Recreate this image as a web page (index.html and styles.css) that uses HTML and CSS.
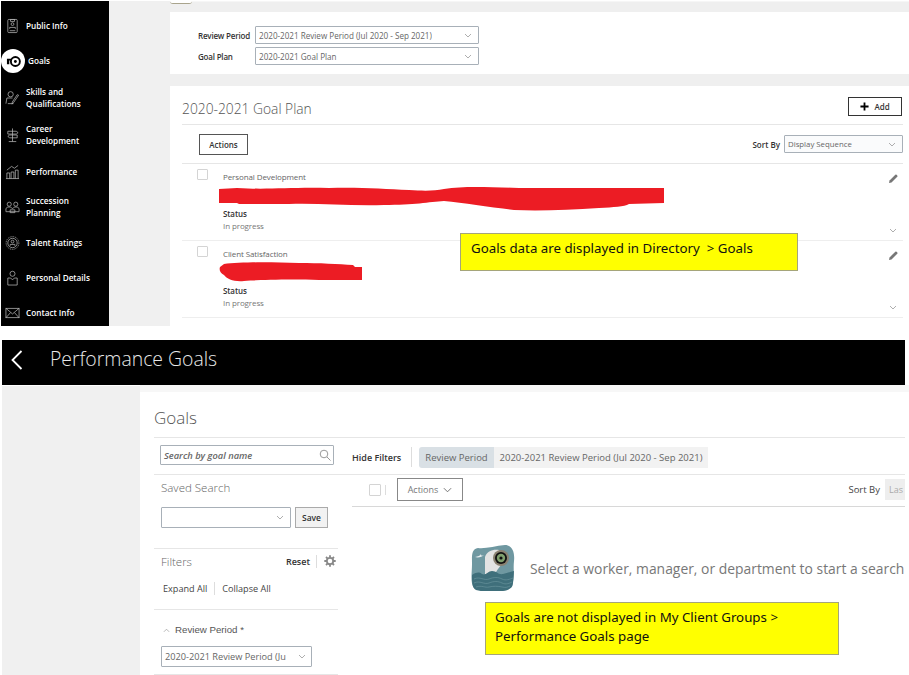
FILE: index.html
```html
<!DOCTYPE html>
<html lang="en">
<head>
<meta charset="utf-8">
<title>Goals comparison</title>
<link rel="stylesheet" href="styles.css">
</head>
<body>
<div class="page">
  <section class="directory">
    <nav class="side">
      <a class="nav"><svg class="ico" viewBox="0 0 16 16"><rect x="3" y="1" width="10" height="14" rx="1"/><rect x="6" y="1" width="4" height="2"/><circle cx="8" cy="6" r="1.5"/><path d="M5 11v-1.500h6V11M5 13h6"/></svg><span>Public Info</span></a>
      <a class="nav active"><span class="badge"><svg class="goal" viewBox="0 0 16 16"><circle cx="10" cy="8" r="4.800"/><circle class="dot" cx="10" cy="8" r="1.500"/><path class="fill" d="M1 5h4.500v2H3.500v4H1z"/></svg></span><span>Goals</span></a>
      <a class="nav"><svg class="ico" viewBox="0 0 16 16"><circle cx="6" cy="4" r="2.800"/><path d="M1 14l1-6h6M3 14h6M14.500 5L9 13l-1.500 1.500.3-2.200L13 4.500z"/></svg><span>Skills and<br>Qualifications</span></a>
      <a class="nav"><svg class="ico" viewBox="0 0 16 16"><path d="M8 1v14M4 15h8M3 4h9l2 1.500L12 7H3zM13 8H5L3 9.500 5 11h8z"/></svg><span>Career<br>Development</span></a>
      <a class="nav"><svg class="ico" viewBox="0 0 16 16"><path d="M1 15h14M2 15V9h3v6M6.500 15V8h3v7M11 15V6h3v9M2 6l5-4 3 2 4-3"/></svg><span>Performance</span></a>
      <a class="nav"><svg class="ico" viewBox="0 0 16 16"><circle cx="4.500" cy="5" r="2.200"/><circle cx="11.500" cy="5" r="2.200"/><path d="M1 13V9.500L3 8h3l2 2 2-2h3l2 1.500V13zM5.500 11h5v3h-5z"/></svg><span>Succession<br>Planning</span></a>
      <a class="nav"><svg class="ico" viewBox="0 0 16 16"><circle cx="8" cy="8" r="6.800" stroke-dasharray="1.200 .8"/><circle cx="8" cy="8" r="5"/><circle cx="8" cy="6.500" r="1.500"/><path d="M5.500 11V9.500h5V11"/></svg><span>Talent Ratings</span></a>
      <a class="nav"><svg class="ico" viewBox="0 0 16 16"><circle cx="8" cy="3.500" r="2.700"/><path d="M3 8h3l2 2 2-2h3v7.500H3z"/></svg><span>Personal Details</span></a>
      <a class="nav"><svg class="ico" viewBox="0 0 16 16"><rect x="1" y="3" width="14" height="10"/><path d="M1 3l7 6 7-6M1 13l5-5.500M15 13l-5-5.500"/></svg><span>Contact Info</span></a>
    </nav>
    <div class="gutter"></div>
    <main class="dir-main">
      <div class="strip"><i class="sliver"></i></div>
      <div class="period-card">
        <div class="field"><span class="field-label">Review Period</span><div class="select wide"><span>2020-2021 Review Period (Jul 2020 - Sep 2021)</span><svg class="chev" viewBox="0 0 8 5"><path d="M1 1l3 3 3-3"/></svg></div></div>
        <div class="field"><span class="field-label">Goal Plan</span><div class="select wide"><span>2020-2021 Goal Plan</span><svg class="chev" viewBox="0 0 8 5"><path d="M1 1l3 3 3-3"/></svg></div></div>
      </div>
      <div class="plan-card">
        <header class="plan-head">
          <h1>2020-2021 Goal Plan</h1>
          <button class="add"><svg viewBox="0 0 10 10"><path d="M5 .5v9M.5 5h9"/></svg>Add</button>
        </header>
        <div class="plan-tools">
          <button class="actions">Actions</button>
          <div class="sort"><span>Sort By</span><div class="select sort-select"><span>Display Sequence</span><svg class="chev" viewBox="0 0 8 5"><path d="M1 1l3 3 3-3"/></svg></div></div>
        </div>
        <article class="goal-row">
          <i class="check"></i>
          <div class="goal-body">
            <div class="goal-name">Personal Development</div>
            <div class="status">Status</div>
            <div class="progress">In progress</div>
          </div>
          <svg class="scribble long" viewBox="0 0 445 25"><path d="M0 3L18 2C50 4 70 1 110 2C140 1 165 3 190 4C205 5 215 5 225 3C245 0 265 1 300 2L445 2V17L410 18C405 21 395 21 380 22C350 24 320 25 295 24C270 21 245 17 225 15C210 16 195 19 165 19C130 20 100 17 70 18L20 18L18 17H0z"/></svg>
          <div class="row-icons">
            <svg class="pencil" viewBox="0 0 10 10"><path d="M0 10l.6-2.800L7 .8a1 1 0 0 1 1.400 0l.8.8a1 1 0 0 1 0 1.400L2.800 9.400z"/></svg>
            <svg class="row-chev" viewBox="0 0 8 5"><path d="M1 1l3 3 3-3"/></svg>
          </div>
        </article>
        <article class="goal-row">
          <i class="check"></i>
          <div class="goal-body">
            <div class="goal-name">Client Satisfaction</div>
            <div class="status">Status</div>
            <div class="progress">In progress</div>
          </div>
          <svg class="scribble short" viewBox="0 0 143 20"><path d="M5 2C20 0 50 0 80 1C100 1 120 2 134 3L136 5H143V18L100 18C70 17 40 18 25 19C15 20 8 17 5 13C1 11 0 8 1 5z"/></svg>
          <div class="row-icons">
            <svg class="pencil" viewBox="0 0 10 10"><path d="M0 10l.6-2.800L7 .8a1 1 0 0 1 1.400 0l.8.8a1 1 0 0 1 0 1.400L2.800 9.400z"/></svg>
            <svg class="row-chev" viewBox="0 0 8 5"><path d="M1 1l3 3 3-3"/></svg>
          </div>
        </article>
      </div>
    </main>
  </section>

  <header class="perf-bar">
    <svg viewBox="0 0 12 20"><path d="M10.500 1L1.500 10l9 9"/></svg>
    <span>Performance Goals</span>
  </header>

  <section class="perf">
    <div class="perf-pane"></div>
    <div class="perf-content">
      <h2>Goals</h2>
      <div class="perf-cols">
        <aside class="filters">
          <div class="search-wrap">
            <div class="search"><em>Search by goal name</em><svg viewBox="0 0 12 12"><circle cx="5" cy="5" r="3.800"/><path d="M8 8l3.500 3.500"/></svg></div>
          </div>
          <div class="saved">
            <div class="saved-title">Saved Search</div>
            <div class="saved-row">
              <div class="select saved-select"><span></span><svg class="chev" viewBox="0 0 8 5"><path d="M1 1l3 3 3-3"/></svg></div>
              <button class="save">Save</button>
            </div>
          </div>
          <div class="filter-box">
            <div class="filter-head"><span class="filters-title">Filters</span><span class="reset">Reset</span><i class="vsep"></i><svg class="gear" viewBox="0 0 12 12"><circle cx="6" cy="6" r="3.200"/><path d="M6 .3v2M6 9.700v2M.3 6h2M9.700 6h2M2 2l1.400 1.400M8.600 8.600L10 10M2 10l1.400-1.400M8.600 3.400L10 2"/></svg></div>
            <div class="expand"><span>Expand All</span><i class="vsep"></i><span>Collapse All</span></div>
          </div>
          <div class="review">
            <div class="review-title"><svg viewBox="0 0 8 5"><path d="M1 4l3-3 3 3"/></svg>Review Period *</div>
            <div class="select review-select"><span>2020-2021 Review Period (Ju</span><svg class="chev" viewBox="0 0 8 5"><path d="M1 1l3 3 3-3"/></svg></div>
          </div>
        </aside>
        <div class="results">
          <div class="chips">
            <span class="hide">Hide Filters</span><i class="vsep tall"></i>
            <div class="chip"><span class="chip-key">Review Period</span><span class="chip-val">2020-2021 Review Period (Jul 2020 - Sep 2021)</span></div>
          </div>
          <div class="result-tools">
            <i class="check big"></i><i class="vsep"></i>
            <button class="actions-menu">Actions<svg viewBox="0 0 10 6"><path d="M1 1l4 4 4-4"/></svg></button>
            <span class="res-sort">Sort By</span><span class="last">Las</span>
          </div>
          <div class="empty">
            <svg class="spy" viewBox="0 0 44 46">
              <path class="blob" d="M7 3C14 4 24 1 34 0c7 0 10 7 9 16-1 8 1 17-2 24-2 5-9 5-17 5-8 1-17 1-21-2-4-5-2-16-2-24C1 12 0 4 7 3z"/>
              <path class="scope" d="M14 12C16 6 22 4 28 5L30 20C27 24 25 26 24 30L14 29z"/>
              <path class="sea" d="M1 30c5-3 7-3 10-1 4 2 6-3 10-3 5 0 6 4 11 3 4-1 7-2 11-3l-1 12c0 5-4 7-10 8-10 1-20 1-27-1-4-2-4-9-4-15z"/>
              <path class="wave" d="M3 34c6-3 10 2 15 0s9-2 13 0 8 0 11-1M3 38c6-3 10 2 15 0s9-2 13 0 8 0 10-1M5 42c6-2 9 1 13 0s9-1 13 0 6 0 8-1"/>
              <circle class="eye-out" cx="30" cy="13" r="8"/>
              <circle class="eye-mid" cx="30" cy="13" r="6"/>
              <circle class="iris" cx="30" cy="13" r="4.200"/>
              <circle class="pupil" cx="30" cy="13" r="1.600"/>
              <path class="gull" d="M4 12c3-1 5-1 6-3 0 2 1 2 3 1-2 2-6 3-9 2z"/>
            </svg>
            <span>Select a worker, manager, or department to start a search</span>
          </div>
        </div>
      </div>
    </div>
  </section>

  <aside class="note note-top">Goals data are displayed in Directory &nbsp;&gt; Goals</aside>
  <aside class="note note-bottom">Goals are not displayed in My Client Groups &gt;<br>Performance Goals page</aside>
</div>
</body>
</html>
```

FILE: styles.css
```css
* { box-sizing: border-box; }
html, body { margin: 0; background: #fff; }
body { font-family: "Open Sans", "Noto Sans", sans-serif; color: #444; }
.page { position: relative; width: 909px; height: 675px; overflow: hidden; padding-top: 1px; }
button { font-family: inherit; background: #fff; padding: 0; }
i { display: block; font-style: normal; }

/* Directory capture */
.directory { display: flex; height: 325px; margin-left: 1px; }
.side { width: 108px; background: #000; color: #fff; display: grid; grid-template-rows: 35px 35px 37px 37px 37px 35px 36px 35px 35px; padding-top: 3px; font-size: 8.200px; font-weight: 600; line-height: 12px; }
.nav { display: flex; align-items: center; gap: 6px; align-self: end; height: 26px; padding-left: 4px; }
.ico { width: 15px; height: 16px; flex: none; fill: none; stroke: #b5b5b5; stroke-width: .8; }
.nav.active { gap: 3px; padding-left: 0; position: relative; }
.badge { width: 24px; height: 24px; border-radius: 50%; background: #fff; display: flex; align-items: center; justify-content: center; flex: none; }
.goal { width: 15px; height: 15px; fill: none; stroke: #000; stroke-width: 2; }
.goal .fill, .goal .dot { fill: #000; stroke: none; }
.gutter { width: 61px; background: #f0f0f0; }
.dir-main { flex: 1; display: flex; flex-direction: column; background: #efefef; min-width: 0; }
.strip { height: 11px; border-top: 1px solid #f6f6f6; }
.sliver { width: 22px; height: 3px; background: #fff; border-bottom: 1px solid #a9a48c; border-radius: 0 0 11px 11px; margin-top: -1px; }
.period-card { height: 62px; background: #fff; padding: 14px 0 0 28px; display: flex; flex-direction: column; gap: 3px; }
.field { display: flex; align-items: center; height: 18px; }
.field-label { width: 57px; font-size: 8px; letter-spacing: -.2px; font-weight: 600; color: #333; white-space: nowrap; }
.select { display: flex; align-items: center; justify-content: space-between; background: #fff; border: 1px solid #a8b0b8; border-radius: 1px; font-size: 8.100px; color: #666; padding: 0 6px 0 3px; white-space: nowrap; overflow: hidden; }
.select > span { overflow: hidden; }
.wide { width: 224px; height: 18px; }
.chev { width: 8px; height: 5px; flex: none; fill: none; stroke: #999; stroke-width: .8; }
.plan-card { margin-top: 12px; flex: 1; background: #fff; padding: 0 6px 0 12px; }
.plan-head { height: 39px; padding: 6px 1px 0 0; border-bottom: 1px solid #e6e6e6; display: flex; align-items: center; justify-content: space-between; }
h1 { margin: 0; font-size: 13.800px; font-weight: 300; color: #555; }
.add { width: 54px; height: 19px; border: 1px solid #333; font-size: 8px; font-weight: 600; color: #333; display: flex; align-items: center; justify-content: center; gap: 5px; margin-top: -3px; }
.add svg { width: 9px; height: 9px; fill: none; stroke: #000; stroke-width: 2; }
.plan-tools { height: 39px; border-bottom: 1px solid #e6e6e6; display: flex; align-items: center; justify-content: space-between; padding-left: 17px; }
.actions { width: 49px; height: 21px; border: 1px solid #555; font-size: 8px; font-weight: 600; color: #333; }
.sort { display: flex; align-items: center; gap: 4px; font-size: 8px; font-weight: 600; color: #333; }
.sort-select { width: 119px; height: 18px; font-weight: 400; background: #fafbfc; font-size: 7.800px; }
.goal-row { position: relative; height: 77px; border-bottom: 1px solid #eee; display: flex; padding: 5px 4px 0 15px; }
.check { width: 11px; height: 11px; border: 1px solid #d4d4d4; border-radius: 1px; flex: none; }
.goal-body { margin-left: 15px; padding-top: 2px; flex: 1; font-size: 8px; letter-spacing: -.1px; line-height: 12px; }
.goal-name { color: #666; }
.status { margin-top: 25px; font-weight: 600; color: #333; }
.progress { color: #777; }
.scribble { position: absolute; fill: #ec1c24; filter: blur(.5px); }
.scribble.long { left: 37px; top: 22px; width: 445px; height: 25px; }
.scribble.short { left: 37px; top: 21px; width: 143px; height: 20px; }
.row-icons { width: 12px; display: flex; flex-direction: column; align-items: center; justify-content: space-between; padding: 5px 0 2px; height: 66px; }
.pencil { width: 9px; height: 9px; fill: #777; }
.row-chev { width: 8px; height: 5px; fill: none; stroke: #999; stroke-width: .8; }

/* Performance capture */
.perf-bar { margin: 14px 4px 0 2px; height: 45px; background: #000; color: #e8e8e8; display: flex; align-items: center; padding-left: 9px; gap: 27px; font-size: 19.400px; font-weight: 300; }
.perf-bar svg { width: 12px; height: 20px; margin-top: -6px; fill: none; stroke: #fff; stroke-width: 1.800; }
.perf-bar span { margin-top: -8px; }
.perf { display: flex; margin-left: 2px; height: 290px; }
.perf-pane { width: 138px; background: #f0f0f0; margin-top: 1px; flex: none; }
.perf-content { flex: 1; min-width: 0; padding: 0 4px 0 14px; border-top: 7px solid #f7f7f7; overflow: hidden; }
h2 { margin: 0; height: 46px; border-bottom: 1px solid #e6e6e6; padding-top: 14px; font-size: 17px; line-height: 24px; font-weight: 300; color: #555; }
.perf-cols { display: flex; }
.filters { width: 184px; flex: none; }
.search-wrap { height: 37px; padding: 7px 0 0 6px; border-bottom: 1px solid #e6e6e6; }
.search { width: 174px; height: 20px; border: 1px solid #a8b0b8; border-radius: 1px; display: flex; align-items: center; justify-content: space-between; padding: 0 2px 0 3px; font-size: 9.300px; font-weight: 600; color: #666; }
.search svg { width: 12px; height: 12px; fill: none; stroke: #999; stroke-width: 1; }
.saved { height: 74px; padding: 4px 0 0 7px; border-bottom: 1px solid #e6e6e6; }
.saved-title { font-size: 11.500px; line-height: 18px; color: #666; font-weight: 300; }
.saved-row { display: flex; gap: 4px; margin-top: 10px; }
.saved-select { width: 130px; height: 21px; }
.save { width: 33px; height: 21px; border: 1px solid #aaa; background: #f2f2f2; font-size: 8.500px; font-weight: 600; color: #333; }
.filter-box { height: 61px; border-bottom: 1px solid #e6e6e6; padding: 3px 2px 0 7px; }
.filter-head { display: flex; align-items: center; height: 18px; }
.filters-title { flex: 1; font-size: 11.500px; color: #666; font-weight: 300; }
.reset { font-size: 9px; font-weight: 600; color: #333; }
.vsep { width: 1px; height: 13px; background: #ddd; flex: none; }
.filter-head .vsep { margin: 0 7px 0 6px; }
.gear { width: 12px; height: 12px; fill: none; stroke: #888; stroke-width: 1.800; }
.expand { display: flex; align-items: center; gap: 7px; margin: 12px 0 0 2px; font-size: 9.100px; color: #444; }
.review { padding: 13px 0 0 9px; border-bottom: 1px solid #e6e6e6; height: 65px; }
.review-title { display: flex; align-items: center; gap: 5px; font-family: "Liberation Sans", sans-serif; font-size: 9.700px; line-height: 14px; color: #555; }
.review-title svg { width: 7px; height: 5px; fill: none; stroke: #999; stroke-width: .8; }
.review-select { width: 151px; height: 21px; margin: 9px 0 0 -2px; font-size: 9.200px; padding-right: 5px; }
.results { flex: 1; min-width: 0; padding-left: 14px; }
.chips { height: 37px; border-bottom: 1px solid #e6e6e6; margin-left: -14px; padding: 2px 0 0 14px; display: flex; align-items: center; }
.hide { width: 51px; font-size: 9px; font-weight: 600; color: #333; white-space: nowrap; }
.vsep.tall { height: 20px; margin: 0 7px 0 8px; }
.chip { display: flex; height: 21px; font-size: 9.500px; line-height: 21px; color: #666; white-space: nowrap; }
.chip-key { width: 75px; background: #d9e0e5; border-radius: 3px 0 0 3px; text-align: center; }
.chip-val { width: 214px; background: #f2f2f2; text-align: center; }
.result-tools { height: 32px; border-bottom: 1px solid #d8d8d8; display: flex; align-items: center; padding: 0 0 2px 17px; }
.check.big { width: 12px; height: 12px; }
.result-tools .vsep { height: 10px; margin: 0 11px 0 4px; }
.actions-menu { width: 66px; height: 23px; border: 1px solid #888; font-size: 9px; color: #777; display: flex; align-items: center; justify-content: center; gap: 5px; }
.actions-menu svg { width: 9px; height: 6px; fill: none; stroke: #666; stroke-width: 1; }
.res-sort { margin-left: auto; font-size: 9.500px; color: #444; }
.last { width: 20px; height: 21px; margin-left: 5px; background: #eee; color: #aaa; font-size: 9px; line-height: 21px; padding-left: 4px; overflow: hidden; }
.empty { display: flex; align-items: center; padding: 38px 0 0 119px; gap: 15px; white-space: nowrap; font-size: 13.900px; color: #777; }
.spy { width: 44px; height: 46px; flex: none; }
.blob { fill: #6f98a1; }
.sea { fill: #3f6f7b; }
.wave { fill: none; stroke: #6f98a1; stroke-width: .6; }
.scope { fill: #e3e3e3; }
.eye-out { fill: #8a8170; }
.eye-mid { fill: #111; }
.iris { fill: #7f9f6d; }
.pupil { fill: #111; }
.gull { fill: #e8eef0; }

/* Callouts */
.note { position: absolute; background: #ffff00; border: 1px solid #a5a57a; color: #111; font-family: "Noto Sans", sans-serif; font-size: 13.300px; }
.note-top { left: 460px; top: 233px; width: 338px; height: 38px; padding: 6px 10px; line-height: 17px; }
.note-bottom { left: 485px; top: 602px; width: 354px; height: 53px; padding: 5px 9px; line-height: 19px; }
```
